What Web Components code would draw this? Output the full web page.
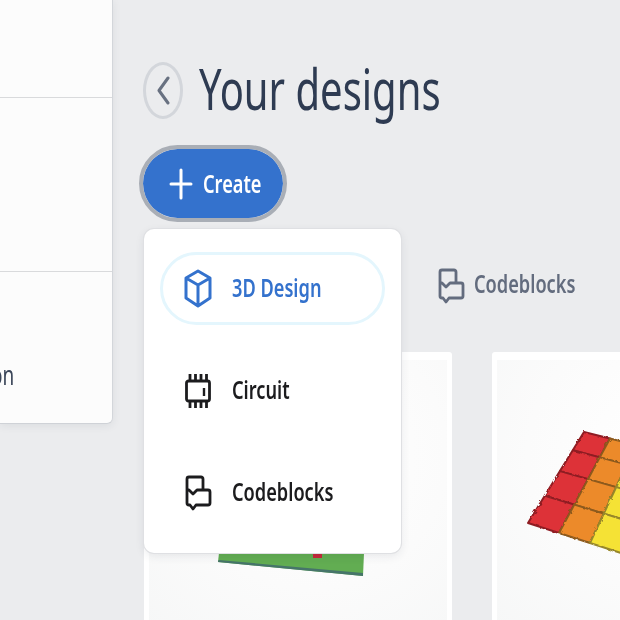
<!DOCTYPE html>
<html>
<head>
<meta charset="utf-8">
<style>
    html, body { margin: 0; height: 620px; overflow: hidden; }
    body { background: #ebecee; font-family: "Noto Sans", sans-serif; }
</style>
</head>
<body>
<designs-page></designs-page>

<script>
const ICONS = {
    cube: `<svg width="28" height="40" viewBox="0 0 28 40" fill="none" stroke="currentColor" stroke-width="3" stroke-linejoin="round"><path d="M14 2 26 9V29L14 37 2 29V9Z M2 9 14 16 26 9 M14 16V37"/></svg>`,
    circuit: `<svg width="28" height="38" viewBox="0 0 28 38" fill="none" stroke="currentColor" stroke-width="2.8" stroke-linejoin="round"><rect x="2.5" y="9" width="23" height="20" rx="2"/><path d="M6 2V9M11.500 2V9M17 2V9M22.500 2V9M6 29V36M11.500 29V36M17 29V36M22.500 29V36"/><path d="M20 16V24" stroke-width="2.400"/></svg>`,
    blocks: `<svg width="27" height="36" viewBox="14 5 27 36" fill="none" stroke="currentColor" stroke-width="2.8" stroke-linejoin="round"><path d="M32 20V9a2 2 0 0 0-2-2H18a2 2 0 0 0-2 2V33a2 2 0 0 0 2 2h1l3 4 3-4H37a2 2 0 0 0 2-2V22a2 2 0 0 0-2-2H26l-4 4-4-4h-2"/></svg>`
};

// the reference is stretched vertically, so the text is too
class TallText extends HTMLElement {
    constructor() {
        super();
        this.attachShadow({ mode: 'open' });
        this.shadowRoot.innerHTML = `
            <style>
                :host { display: inline-block; transform: scaleY(1.42); white-space: nowrap; line-height: 1; }
            </style>
            <slot></slot>
        `;
    }
}

class SideCard extends HTMLElement {
    constructor() {
        super();
        this.attachShadow({ mode: 'open' });
        this.shadowRoot.innerHTML = `
            <style>
                :host {
                    display: flex;
                    flex-direction: column;
                    flex: none;
                    box-sizing: border-box;
                    width: 113px;
                    height: 424px;
                    background: #fcfcfc;
                    border-right: 1px solid #d3d6da;
                    border-bottom: 1px solid #cfd2d7;
                    border-radius: 0 0 6px 0;
                    box-shadow: 0 2px 8px rgba(40, 50, 70, .08);
                    overflow: hidden;
                }
                .row { border-bottom: 1px solid #d9dadc; }
                .a { height: 97px; }
                .b { height: 173px; }
                .c { flex: 1; border: 0; padding: 90px 0 0; color: #3b4659; font-size: 19px; }
                tall-text { margin-left: -9px; }
            </style>
            <div class="row a"></div>
            <div class="row b"></div>
            <div class="row c"><tall-text>on</tall-text></div>
        `;
    }
}

class BackHeader extends HTMLElement {
    constructor() {
        super();
        this.attachShadow({ mode: 'open' });
        this.shadowRoot.innerHTML = `
            <style>
                :host { display: flex; align-items: center; gap: 16px; height: 57px; color: #2e3b52; }
                .back {
                    box-sizing: border-box;
                    width: 40px;
                    height: 57px;
                    border: 3px solid #d3d6db;
                    border-radius: 50%;
                    display: flex;
                    align-items: center;
                    justify-content: center;
                }
                .title { font-size: 40px; font-weight: 400; position: relative; top: -2px; }
            </style>
            <div class="back">
                <svg width="13" height="29" viewBox="0 0 13 29" fill="none" stroke="#687181" stroke-width="3" stroke-linecap="round" stroke-linejoin="round"><path d="M11 2 2 14.500 11 27"/></svg>
            </div>
            <tall-text class="title">Your designs</tall-text>
        `;
    }
}

class CreateButton extends HTMLElement {
    constructor() {
        super();
        this.attachShadow({ mode: 'open' });
        this.shadowRoot.innerHTML = `
            <style>
                :host {
                    display: flex;
                    align-items: center;
                    gap: 10px;
                    box-sizing: border-box;
                    width: 148px;
                    height: 77px;
                    margin-left: -4px;
                    padding-left: 26px;
                    background: #3472cd;
                    background-clip: padding-box;
                    border: 4px solid #a9aeb6;
                    border-radius: 39px;
                    color: #fff;
                    font-size: 18.200px;
                    font-weight: 600;
                }
                svg { flex: none; }
            </style>
            <svg width="24" height="32" viewBox="0 0 24 32" fill="none" stroke="#fff" stroke-width="3" stroke-linecap="round"><path d="M12 2V30M2 16H22"/></svg>
            <tall-text><slot></slot></tall-text>
        `;
    }
}

class MenuItem extends HTMLElement {
    constructor() {
        super();
        this.attachShadow({ mode: 'open' });
        this.shadowRoot.innerHTML = `
            <style>
                :host {
                    display: flex;
                    align-items: center;
                    box-sizing: border-box;
                    height: 73px;
                    padding-left: 21px;
                    border: 3px solid transparent;
                    border-radius: 37px;
                    color: #1c1c1e;
                    font-size: 18.200px;
                    font-weight: 600;
                }
                :host([active]) { border-color: #e4f6fd; color: #3472cd; }
                .icon { display: flex; justify-content: center; width: 28px; margin-right: 20px; }
                tall-text { margin-top: -2px; }
            </style>
            <span class="icon">${ICONS[this.getAttribute('icon')]}</span>
            <tall-text><slot></slot></tall-text>
        `;
    }
}

class CreateMenu extends HTMLElement {
    constructor() {
        super();
        this.attachShadow({ mode: 'open' });
        this.shadowRoot.innerHTML = `
            <style>
                :host {
                    display: flex;
                    flex-direction: column;
                    gap: 29px;
                    box-sizing: border-box;
                    position: absolute;
                    top: 84px;
                    left: 1px;
                    width: 257px;
                    height: 324px;
                    padding: 23px 16px;
                    background: #fff;
                    border-radius: 10px;
                    box-shadow: 0 0 0 1px #dfe0e3, 0 3px 10px rgba(40, 50, 70, .10);
                    z-index: 2;
                }
            </style>
            <slot></slot>
        `;
    }
}

class TabLink extends HTMLElement {
    constructor() {
        super();
        this.attachShadow({ mode: 'open' });
        this.shadowRoot.innerHTML = `
            <style>
                :host {
                    display: flex;
                    align-items: center;
                    gap: 9px;
                    height: 38px;
                    color: #636c7e;
                    font-size: 18.200px;
                    font-weight: 600;
                }
                tall-text { margin-top: -5px; }
            </style>
            ${ICONS.blocks}
            <tall-text><slot></slot></tall-text>
        `;
    }
}

class DesignCard extends HTMLElement {
    constructor() {
        super();
        this.attachShadow({ mode: 'open' });
        this.shadowRoot.innerHTML = `
            <style>
                :host {
                    display: block;
                    flex: none;
                    box-sizing: border-box;
                    width: 308px;
                    height: 290px;
                    padding: 8px 5px;
                    background: #fff;
                    border-radius: 3px;
                }
                .thumb {
                    height: 100%;
                    background: radial-gradient(circle at 55% 35%, #fff 0, #fbfbfb 55%, #f6f7f7 100%);
                }
                ::slotted(svg) { display: block; }
            </style>
            <div class="thumb"><slot></slot></div>
        `;
    }
}

class DesignsPage extends HTMLElement {
    constructor() {
        super();
        this.attachShadow({ mode: 'open' });
        this.shadowRoot.innerHTML = `
            <style>
                :host { display: flex; gap: 30px; height: 620px; overflow: hidden; }
                main { flex: 1; min-width: 0; padding-top: 62px; }
                .create { position: relative; margin-top: 26px; }
                .tabs { display: flex; padding: 45px 0 0 295px; height: 130px; box-sizing: border-box; }
                .cards { display: flex; gap: 40px; margin-left: 1px; }
            </style>
            <side-card></side-card>
            <main>
                <back-header></back-header>
                <div class="create">
                    <create-button>Create</create-button>
                    <create-menu>
                        <menu-item icon="cube" active>3D Design</menu-item>
                        <menu-item icon="circuit">Circuit</menu-item>
                        <menu-item icon="blocks">Codeblocks</menu-item>
                    </create-menu>
                </div>
                <div class="tabs"><tab-link>Codeblocks</tab-link></div>
                <div class="cards">
                    <design-card>
                        <svg width="298" height="274" viewBox="149 360 298 274">
                            <path d="M219 553H364L363 576 218 562Z" fill="#62ad52"/>
                            <path d="M218.500 560 363 573 363 576 218 562Z" fill="#46756a"/>
                            <rect x="313" y="553" width="9" height="5" fill="#c5283a"/>
                        </svg>
                    </design-card>
                    <design-card>
                        <svg id="tiles" width="298" height="274" viewBox="497 360 298 274">
                            <defs>
                                <filter id="rough" x="-5%" y="-5%" width="110%" height="110%">
                                    <feTurbulence type="fractalNoise" baseFrequency=".25" numOctaves="2" seed="4"/>
                                    <feDisplacementMap in="SourceGraphic" scale="3"/>
                                </filter>
                            </defs>
                            <g id="grid" filter="url(#rough)"></g>
                        </svg>
                    </design-card>
                </div>
            </main>
        `;
    }

    connectedCallback() {
        // plate of tiles: 4 rows, columns red / orange / yellow, drawn from its corners
        const rows = [0, .2, .43, .7, 1];
        const cols = ['#dd3139', '#ec8a2b', '#f5e236', '#f5e236'];
        const edge = ['#8f1f24', '#8d5a1f', '#97872a', '#97872a'];
        const point = (c, t) => {
            const x0 = 584 - 56 * t;
            const y0 = 432 + 91 * t;
            return [x0 + c * (26 + 5 * t), y0 + c * (6.500 + 3.500 * t)];
        };
        let out = '';
        cols.forEach((fill, c) => {
            for (let r = 0; r < 4; r++) {
                const pts = [point(c, rows[r]), point(c + 1, rows[r]), point(c + 1, rows[r + 1]), point(c, rows[r + 1])];
                out += `<polygon points="${pts.map(p => p.join(',')).join(' ')}" fill="${fill}" stroke="${edge[c]}" stroke-width="2" stroke-linejoin="round"/>`;
            }
        });
        this.shadowRoot.getElementById('grid').innerHTML = out;
    }
}

customElements.define('tall-text', TallText);
customElements.define('side-card', SideCard);
customElements.define('back-header', BackHeader);
customElements.define('create-button', CreateButton);
customElements.define('menu-item', MenuItem);
customElements.define('create-menu', CreateMenu);
customElements.define('tab-link', TabLink);
customElements.define('design-card', DesignCard);
customElements.define('designs-page', DesignsPage);
</script>
</body>
</html>
